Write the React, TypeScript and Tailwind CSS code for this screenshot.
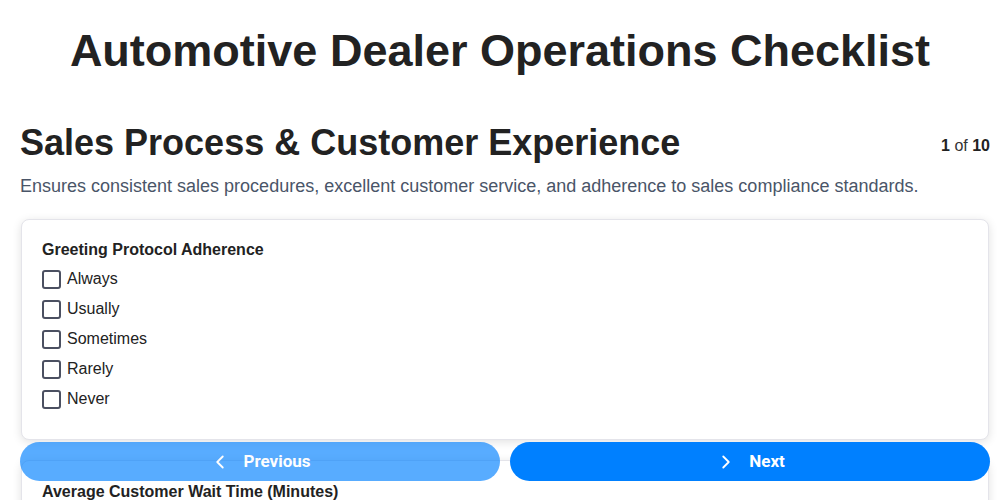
import React from "react";
import { ChevronLeft, ChevronRight } from "lucide-react";

const options = ["Always", "Usually", "Sometimes", "Rarely", "Never"];

function Checkbox({ label }: { label: string }) {
  return (
    <label className="flex items-center h-[30px] gap-[6px] cursor-pointer">
      <span className="w-[19px] h-[19px] rounded-[3px] border-2 border-[#4b5061] bg-white shrink-0" />
      <span className="text-[16px] text-[#222]">{label}</span>
    </label>
  );
}

export default function App() {
  return (
    <div className="min-h-screen bg-white pb-5 text-[#222]" style={{ fontFamily: '"Liberation Sans", Arial, sans-serif' }}>
      <h1 className="text-center text-[45px] font-bold leading-none pt-[28px] text-[#222]">
        Automotive Dealer Operations Checklist
      </h1>
      <div className="pl-5 pr-[10px]">
        <div className="flex items-start justify-between mt-[52px]">
          <h2 className="text-[36px] font-bold leading-none text-[#222]">Sales Process &amp; Customer Experience</h2>
          <div className="text-[16px] text-[#333] mt-[9px]">
            <span className="font-bold text-[#222]">1</span> of <span className="font-bold text-[#222]">10</span>
          </div>
        </div>
        <p className="text-[18px] text-[#4a5568] mt-[12px]">
          Ensures consistent sales procedures, excellent customer service, and adherence to sales compliance standards.
        </p>

        <div className="mt-[19px] flex flex-col px-[1px]">
          <div className="rounded-lg border border-[#e4e4ea] bg-white shadow-[0_2px_10px_rgba(0,0,0,0.12)] px-5 pt-[18px] pb-[25px]">
            <div className="text-[16px] font-bold text-[#222] mb-[2px]">Greeting Protocol Adherence</div>
            {options.map((o) => (
              <Checkbox key={o} label={o} />
            ))}
          </div>

          <div className="relative z-10 mt-[2px] -mx-[1px] flex gap-[10px]" style={{ fontFamily: 'Roboto, "Liberation Sans", sans-serif' }}>
            <button className="flex-1 h-[39px] rounded-full bg-[#0080ff] opacity-65 text-white font-bold text-[17px] flex items-center justify-center gap-[12px]">
              <ChevronLeft size={22} strokeWidth={2} />
              Previous
            </button>
            <button className="flex-1 h-[39px] rounded-full bg-[#0080ff] text-white font-bold text-[17px] flex items-center justify-center gap-[12px]">
              <ChevronRight size={22} strokeWidth={2} />
              Next
            </button>
          </div>

          <div className="-mt-[21px] rounded-lg border border-[#e4e4ea] bg-white shadow-[0_2px_10px_rgba(0,0,0,0.12)] px-5 pt-[19px] pb-[25px]">
            <div className="text-[16px] font-bold text-[#222] mb-[8px]">Average Customer Wait Time (Minutes)</div>
            <input type="number" className="w-full h-[38px] rounded border border-[#cfd4dc] px-3 text-[16px]" />
          </div>
        </div>
      </div>
    </div>
  );
}
